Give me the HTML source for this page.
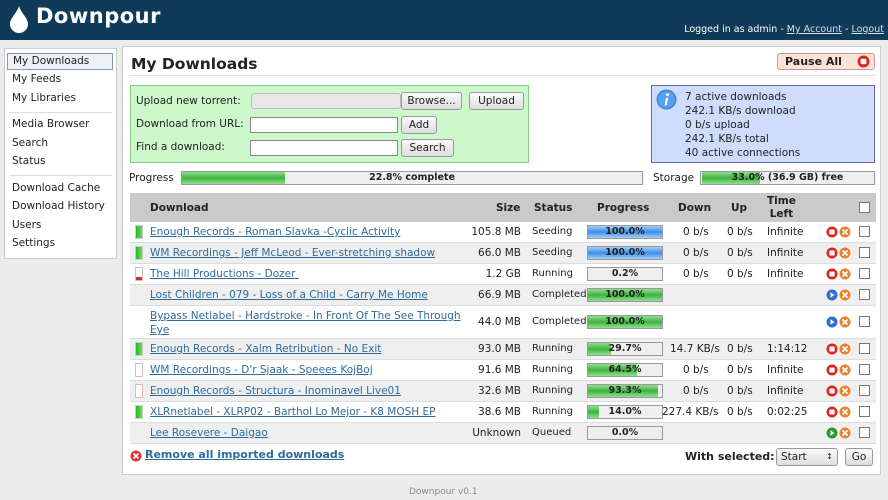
<!DOCTYPE html>
<html><head><meta charset="utf-8"><style>
*{box-sizing:border-box;margin:0;padding:0}
body{width:888px;height:500px;background:#ececec;font-family:"DejaVu Sans","Liberation Sans",sans-serif;font-size:10.5px;color:#222;position:relative;overflow:hidden}
.a{position:absolute}
#hdr{left:0;top:0;width:888px;height:40px;background:#0f3a58}
#logo{left:36px;top:4px;color:#fff;font-weight:bold;font-size:21px;letter-spacing:0.5px}
#login{right:4px;top:24px;color:#fff;font-size:9.5px}
#login u{color:#dde}
#side{left:4px;top:48px;width:113px;height:211px;background:#fff;border:1px solid #ccc}
#side div{position:absolute;left:7px;font-size:10.5px}
#main{left:122px;top:46px;width:759px;height:429px;background:#fff;border:1px solid #ccc}
a,.lk{color:#2d6b9d;text-decoration:underline}
.btn{position:absolute;height:18px;border:1px solid #999;border-radius:3px;background:linear-gradient(#fafafa,#ddd);font-size:10.5px;text-align:center;line-height:16px}
.inp{position:absolute;height:16px;border:1px solid #888;background:#fff}
.pb{position:absolute;width:76px;height:14px;border:1px solid #999;background:#eee;font-weight:bold;font-size:9.5px;text-align:center;line-height:12px;overflow:hidden}
.pb i{position:absolute;left:0;top:0;bottom:0}
.pb span{position:relative}
.g{background:linear-gradient(#8fe08f,#3fb33f 50%,#8fe08f)}
.b{background:linear-gradient(#a8cdf7,#3d8fe6 50%,#a8cdf7)}
.row{position:absolute;left:130px;width:746px;border-bottom:1px solid #ddd}
.row>*{position:absolute}
.row>a,.row>span:not(.st):not(.cb){margin-top:1px}
.row>span[style*="left:402px"]{font-size:10px}
.gr{background:#efefef}
.cb{width:11px;height:11px;border:1px solid #777;background:#fff}
.st{left:5px;width:8px;height:14px;border:1px solid #ccc}
</style></head><body>
<div id="hdr" class="a"></div>
<svg class="a" style="left:9px;top:5px" width="20" height="28" viewBox="0 0 20 28"><path d="M10 1 C12 8 19 13 19 19 A9 9 0 0 1 1 19 C1 13 8 8 10 1Z" fill="#fff"/></svg>
<div id="logo" class="a">Downpour</div>
<div id="login" class="a">Logged in as admin - <u>My Account</u> - <u>Logout</u></div>

<div id="side" class="a">
<div style="left:2px;top:4px;width:106px;height:17px;border:1px solid #7a9cc0;background:#eef2f6;padding-left:5px;line-height:15px">My Downloads</div>
<div style="top:24px">My Feeds</div>
<div style="top:43px">My Libraries</div>
<div style="left:4px;top:63px;width:103px;border-top:1px solid #ddd"></div>
<div style="top:69px">Media Browser</div>
<div style="top:88px">Search</div>
<div style="top:106px">Status</div>
<div style="left:4px;top:126px;width:103px;border-top:1px solid #ddd"></div>
<div style="top:133px">Download Cache</div>
<div style="top:151px">Download History</div>
<div style="top:170px">Users</div>
<div style="top:188px">Settings</div>
</div>

<div id="main" class="a"></div>
<div class="a" style="left:131px;top:55px;font-size:15.5px;font-weight:bold;color:#222">My Downloads</div>
<div class="a" style="left:130px;top:75px;width:746px;border-top:1px solid #ddd"></div>
<div class="a" style="left:777px;top:53px;width:98px;height:17px;border:1px solid #c99;border-radius:3px;background:#fde3d6;font-weight:bold;font-size:11px;line-height:15px;padding-left:7px">Pause All</div>
<svg class="a" style="left:857px;top:55px" width="13" height="13" viewBox="0 0 12 12"><circle cx="6" cy="6" r="5.5" fill="#d22"/><rect x="3.3" y="3.5" width="5.4" height="5" rx="1" fill="#fff"/></svg>

<div class="a" style="left:130px;top:85px;width:399px;height:78px;background:#ccf8cc;border:1px solid #8c8"></div>
<div class="a" style="left:136px;top:95px">Upload new torrent:</div>
<div class="a" style="left:136px;top:118px">Download from URL:</div>
<div class="a" style="left:136px;top:141px">Find a download:</div>
<div class="inp" style="left:251px;top:93px;width:150px;background:#e8e8e8;border-color:#bbb;border-radius:3px"></div>
<div class="btn" style="left:401px;top:92px;width:61px">Browse...</div>
<div class="btn" style="left:469px;top:92px;width:55px">Upload</div>
<div class="inp" style="left:250px;top:117px;width:148px"></div>
<div class="btn" style="left:401px;top:116px;width:36px">Add</div>
<div class="inp" style="left:250px;top:140px;width:148px"></div>
<div class="btn" style="left:401px;top:139px;width:53px">Search</div>

<div class="a" style="left:651px;top:85px;width:224px;height:78px;background:#cfdcfc;border:1px solid #66b"></div>
<svg class="a" style="left:656px;top:89px" width="21" height="21" viewBox="0 0 20 20"><circle cx="10" cy="10" r="9.5" fill="#3a86dd"/><circle cx="10" cy="10" r="8" fill="#5aa0ee"/><circle cx="11" cy="5.5" r="1.4" fill="#fff"/><path d="M9.5 8.5h2l-1.3 7h-2z" fill="#fff"/></svg>
<div class="a" style="left:685px;top:90px;line-height:14px;font-size:10.5px">7 active downloads<br>242.1 KB/s download<br>0 b/s upload<br>242.1 KB/s total<br>40 active connections</div>

<div class="a" style="left:129px;top:172px">Progress</div>
<div class="pb" style="left:181px;top:171px;width:462px"><i class="g" style="width:103px"></i><span>22.8% complete</span></div>
<div class="a" style="left:653px;top:172px">Storage</div>
<div class="pb" style="left:700px;top:171px;width:175px"><i class="g" style="width:58px;left:1px"></i><span>33.0% (36.9 GB) free</span></div>

<div class="row" style="top:193px;height:29px;background:#cacaca;border:none;font-weight:bold;font-size:10.5px">
<span style="left:20px;top:8px">Download</span>
<span style="left:366px;top:8px">Size</span>
<span style="left:404px;top:8px">Status</span>
<span style="left:467px;top:8px">Progress</span>
<span style="left:548px;top:8px">Down</span>
<span style="left:601px;top:8px">Up</span>
<span style="left:637px;top:1px;text-align:center;line-height:13px">Time<br>Left</span>
<span class="cb" style="left:729px;top:9px"></span>
</div>

<div class="row" style="top:222px;height:21px"><span class="st" style="top:3px;background:linear-gradient(90deg,#2b2 0,#6d6 100%)"></span><a style="left:20px;top:3px">Enough Records - Roman Slavka -Cyclic Activity</a><span style="right:355px;top:3px">105.8 MB</span><span style="left:402px;top:3px">Seeding</span><div class="pb" style="left:457px;top:3px"><i class="b" style="width:76px"></i><span>100.0%</span></div><span style="left:553px;top:3px">0 b/s</span><span style="left:597px;top:3px">0 b/s</span><span style="left:637px;top:3px">Infinite</span><svg style="left:696px;top:4px" width="26" height="12"><circle cx="6" cy="6" r="5.5" fill="#d22"/><rect x="3.3" y="3.5" width="5.4" height="5" rx="1" fill="#fff"/><circle cx="19" cy="6" r="5.5" fill="#e9822a"/><path d="M16.5 3.5l5 5M21.5 3.5l-5 5" stroke="#fff" stroke-width="1.6"/></svg><span class="cb" style="left:729px;top:4px"></span></div>

<div class="row gr" style="top:243px;height:21px"><span class="st" style="top:3px;background:linear-gradient(90deg,#2b2 0,#6d6 100%)"></span><a style="left:20px;top:3px">WM Recordings - Jeff McLeod - Ever-stretching shadow</a><span style="right:355px;top:3px">66.0 MB</span><span style="left:402px;top:3px">Seeding</span><div class="pb" style="left:457px;top:3px"><i class="b" style="width:76px"></i><span>100.0%</span></div><span style="left:553px;top:3px">0 b/s</span><span style="left:597px;top:3px">0 b/s</span><span style="left:637px;top:3px">Infinite</span><svg style="left:696px;top:4px" width="26" height="12"><circle cx="6" cy="6" r="5.5" fill="#d22"/><rect x="3.3" y="3.5" width="5.4" height="5" rx="1" fill="#fff"/><circle cx="19" cy="6" r="5.5" fill="#e9822a"/><path d="M16.5 3.5l5 5M21.5 3.5l-5 5" stroke="#fff" stroke-width="1.6"/></svg><span class="cb" style="left:729px;top:4px"></span></div>

<div class="row" style="top:264px;height:21px"><span class="st" style="top:3px;border-color:#dbb;background:linear-gradient(#fff 75%,#c33 75%)"></span><a style="left:20px;top:3px">The Hill Productions - Dozer&nbsp;</a><span style="right:355px;top:3px">1.2 GB</span><span style="left:402px;top:3px">Running</span><div class="pb" style="left:457px;top:3px"><span>0.2%</span></div><span style="left:553px;top:3px">0 b/s</span><span style="left:597px;top:3px">0 b/s</span><span style="left:637px;top:3px">Infinite</span><svg style="left:696px;top:4px" width="26" height="12"><circle cx="6" cy="6" r="5.5" fill="#d22"/><rect x="3.3" y="3.5" width="5.4" height="5" rx="1" fill="#fff"/><circle cx="19" cy="6" r="5.5" fill="#e9822a"/><path d="M16.5 3.5l5 5M21.5 3.5l-5 5" stroke="#fff" stroke-width="1.6"/></svg><span class="cb" style="left:729px;top:4px"></span></div>

<div class="row gr" style="top:285px;height:21px"><a style="left:20px;top:3px">Lost Children - 079 - Loss of a Child - Carry Me Home</a><span style="right:355px;top:3px">66.9 MB</span><span style="left:402px;top:3px">Completed</span><div class="pb" style="left:457px;top:3px"><i class="g" style="width:76px"></i><span>100.0%</span></div><svg style="left:696px;top:4px" width="26" height="12"><circle cx="6" cy="6" r="5.5" fill="#2f6fd0"/><path d="M4.5 3.3l4 2.7-4 2.7z" fill="#fff"/><circle cx="19" cy="6" r="5.5" fill="#e9822a"/><path d="M16.5 3.5l5 5M21.5 3.5l-5 5" stroke="#fff" stroke-width="1.6"/></svg><span class="cb" style="left:729px;top:4px"></span></div>

<div class="row" style="top:306px;height:33px"><a style="left:20px;top:2px;width:320px;line-height:14px">Bypass Netlabel - Hardstroke - In Front Of The See Through Eye</a><span style="right:355px;top:9px">44.0 MB</span><span style="left:402px;top:9px">Completed</span><div class="pb" style="left:457px;top:9px"><i class="g" style="width:76px"></i><span>100.0%</span></div><svg style="left:696px;top:10px" width="26" height="12"><circle cx="6" cy="6" r="5.5" fill="#2f6fd0"/><path d="M4.5 3.3l4 2.7-4 2.7z" fill="#fff"/><circle cx="19" cy="6" r="5.5" fill="#e9822a"/><path d="M16.5 3.5l5 5M21.5 3.5l-5 5" stroke="#fff" stroke-width="1.6"/></svg><span class="cb" style="left:729px;top:10px"></span></div>

<div class="row gr" style="top:339px;height:21px"><span class="st" style="top:3px;background:linear-gradient(90deg,#2b2 0,#6d6 100%)"></span><a style="left:20px;top:3px">Enough Records - Xalm Retribution - No Exit</a><span style="right:355px;top:3px">93.0 MB</span><span style="left:402px;top:3px">Running</span><div class="pb" style="left:457px;top:3px"><i class="g" style="width:23px"></i><span>29.7%</span></div><span style="left:540px;top:3px">14.7 KB/s</span><span style="left:597px;top:3px">0 b/s</span><span style="left:637px;top:3px">1:14:12</span><svg style="left:696px;top:4px" width="26" height="12"><circle cx="6" cy="6" r="5.5" fill="#d22"/><rect x="3.3" y="3.5" width="5.4" height="5" rx="1" fill="#fff"/><circle cx="19" cy="6" r="5.5" fill="#e9822a"/><path d="M16.5 3.5l5 5M21.5 3.5l-5 5" stroke="#fff" stroke-width="1.6"/></svg><span class="cb" style="left:729px;top:4px"></span></div>

<div class="row" style="top:360px;height:21px"><span class="st" style="top:3px;border-color:#dbb"></span><a style="left:20px;top:3px">WM Recordings - D'r Sjaak - Speees KojBoj</a><span style="right:355px;top:3px">91.6 MB</span><span style="left:402px;top:3px">Running</span><div class="pb" style="left:457px;top:3px"><i class="g" style="width:49px"></i><span>64.5%</span></div><span style="left:553px;top:3px">0 b/s</span><span style="left:597px;top:3px">0 b/s</span><span style="left:637px;top:3px">Infinite</span><svg style="left:696px;top:4px" width="26" height="12"><circle cx="6" cy="6" r="5.5" fill="#d22"/><rect x="3.3" y="3.5" width="5.4" height="5" rx="1" fill="#fff"/><circle cx="19" cy="6" r="5.5" fill="#e9822a"/><path d="M16.5 3.5l5 5M21.5 3.5l-5 5" stroke="#fff" stroke-width="1.6"/></svg><span class="cb" style="left:729px;top:4px"></span></div>

<div class="row gr" style="top:381px;height:21px"><span class="st" style="top:3px;border-color:#dbb;background:#fff"></span><a style="left:20px;top:3px">Enough Records - Structura - Inominavel Live01</a><span style="right:355px;top:3px">32.6 MB</span><span style="left:402px;top:3px">Running</span><div class="pb" style="left:457px;top:3px"><i class="g" style="width:70px"></i><span>93.3%</span></div><span style="left:553px;top:3px">0 b/s</span><span style="left:597px;top:3px">0 b/s</span><span style="left:637px;top:3px">Infinite</span><svg style="left:696px;top:4px" width="26" height="12"><circle cx="6" cy="6" r="5.5" fill="#d22"/><rect x="3.3" y="3.5" width="5.4" height="5" rx="1" fill="#fff"/><circle cx="19" cy="6" r="5.5" fill="#e9822a"/><path d="M16.5 3.5l5 5M21.5 3.5l-5 5" stroke="#fff" stroke-width="1.6"/></svg><span class="cb" style="left:729px;top:4px"></span></div>

<div class="row" style="top:402px;height:21px"><span class="st" style="top:3px;background:linear-gradient(90deg,#2b2 0,#6d6 100%)"></span><a style="left:20px;top:3px">XLRnetlabel - XLRP02 - Barthol Lo Mejor - K8 MOSH EP</a><span style="right:355px;top:3px">38.6 MB</span><span style="left:402px;top:3px">Running</span><div class="pb" style="left:457px;top:3px"><i class="g" style="width:11px"></i><span>14.0%</span></div><span style="left:532px;top:3px">227.4 KB/s</span><span style="left:597px;top:3px">0 b/s</span><span style="left:637px;top:3px">0:02:25</span><svg style="left:696px;top:4px" width="26" height="12"><circle cx="6" cy="6" r="5.5" fill="#d22"/><rect x="3.3" y="3.5" width="5.4" height="5" rx="1" fill="#fff"/><circle cx="19" cy="6" r="5.5" fill="#e9822a"/><path d="M16.5 3.5l5 5M21.5 3.5l-5 5" stroke="#fff" stroke-width="1.6"/></svg><span class="cb" style="left:729px;top:4px"></span></div>

<div class="row gr" style="top:423px;height:21px"><a style="left:20px;top:3px">Lee Rosevere - Daigao</a><span style="right:355px;top:3px">Unknown</span><span style="left:402px;top:3px">Queued</span><div class="pb" style="left:457px;top:3px"><span>0.0%</span></div><svg style="left:696px;top:4px" width="26" height="12"><circle cx="6" cy="6" r="5.5" fill="#2a9a2a"/><path d="M4.5 3.3l4 2.7-4 2.7z" fill="#fff"/><circle cx="19" cy="6" r="5.5" fill="#e9822a"/><path d="M16.5 3.5l5 5M21.5 3.5l-5 5" stroke="#fff" stroke-width="1.6"/></svg><span class="cb" style="left:729px;top:4px"></span></div>

<svg class="a" style="left:130px;top:450px" width="12" height="12"><circle cx="6" cy="6" r="5.5" fill="#d33"/><path d="M3.5 3.5l5 5M8.5 3.5l-5 5" stroke="#fff" stroke-width="1.6"/></svg>
<a class="a" style="left:145px;top:448px;font-weight:bold;font-size:11px">Remove all imported downloads</a>
<div class="a" style="left:685px;top:450px;font-weight:bold;font-size:11px">With selected:</div>
<div class="btn" style="left:776px;top:448px;width:62px;text-align:left;padding-left:4px">Start<span style="position:absolute;right:4px;font-size:8px">&#x2195;</span></div>
<div class="btn" style="left:845px;top:448px;width:28px">Go</div>

<div class="a" style="left:409px;top:487px;font-size:9px;color:#888">Downpour v0.1</div>
</body></html>
